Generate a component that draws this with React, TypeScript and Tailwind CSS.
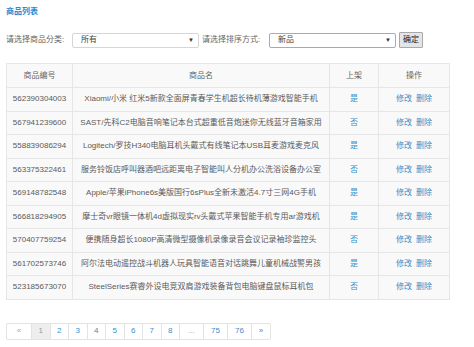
import React from 'react';

const products = [
  { id: '562390304003', name: 'Xiaomi/小米 红米5新款全面屏青春学生机超长待机薄游戏智能手机', on: true },
  { id: '567941239600', name: 'SAST/先科C2电脑音响笔记本台式超重低音炮迷你无线蓝牙音箱家用', on: false },
  { id: '558839086294', name: 'Logitech/罗技H340电脑耳机头戴式有线笔记本USB耳麦游戏麦克风', on: true },
  { id: '563375322461', name: '服务铃饭店呼叫器酒吧远距离电子智能叫人分机办公洗浴设备办公室', on: false },
  { id: '569148782548', name: 'Apple/苹果iPhone6s美版国行6sPlus全新未激活4.7寸三网4G手机', on: true },
  { id: '566818294905', name: '摩士奇vr眼镜一体机4d虚拟现实rv头戴式苹果智能手机专用ar游戏机', on: true },
  { id: '570407759254', name: '便携随身超长1080P高清微型摄像机录像录音会议记录袖珍监控头', on: false },
  { id: '561702573746', name: '阿尔法电动遥控战斗机器人玩具智能语音对话跳舞儿童机械战警男孩', on: true },
  { id: '523185673070', name: 'SteelSeries赛睿外设电竞双肩游戏装备背包电脑键盘鼠标耳机包', on: false },
];

const pages = ['1', '2', '3', '4', '5', '6', '7', '8', '...', '75', '76'];

function Select({ value, focused }: { value: string; focused?: boolean }) {
  return (
    <div
      className={`flex h-[15px] w-[127px] items-center justify-between rounded-[2px] border bg-white pl-2 pr-[4px] ${
        focused ? 'border-[#8eaee0]' : 'border-[#d6d6d6]'
      }`}
    >
      <span className="text-[8px] text-[#444]">{value}</span>
      <span className="text-[6px] text-[#333]">▼</span>
    </div>
  );
}

export default function App() {
  return (
    <div
      className="h-[347px] w-[474px] overflow-hidden bg-white text-[8px] text-[#5a5a5a]"
      style={{ fontFamily: '"Liberation Sans", "Noto Sans CJK SC", sans-serif' }}
    >
      {/* Title */}
      <div className="px-[6px] pt-[7px] text-[8px] font-bold leading-[10px] text-[#2b8bd0]">商品列表</div>

      {/* Filters */}
      <div className="mt-[15px] flex items-center px-[6px]">
        <span className="w-[66px] text-[#666]">请选择商品分类:</span>
        <Select value="所有" />
        <span className="ml-[3px] w-[67px] text-[#666]">请选择排序方式:</span>
        <Select value="新品" focused />
        <button className="ml-[3px] h-[16px] rounded-[1px] border border-[#a9a9a9] bg-[#e5e5e5] px-[3px] text-[8px] text-[#222]">
          确定
        </button>
      </div>

      {/* Table */}
      <table className="ml-[6px] mt-[15px] w-[443px] table-fixed border-collapse bg-[#f9f9f9] text-center">
        <colgroup>
          <col className="w-[66px]" />
          <col className="w-[257px]" />
          <col className="w-[49px]" />
          <col className="w-[71px]" />
        </colgroup>
        <thead>
          <tr className="h-[24px]">
            <th className="border border-[#e6e6e6] font-normal text-[#666]">商品编号</th>
            <th className="border border-[#e6e6e6] font-normal text-[#666]">商品名</th>
            <th className="border border-[#e6e6e6] font-normal text-[#666]">上架</th>
            <th className="border border-[#e6e6e6] font-normal text-[#666]">操作</th>
          </tr>
        </thead>
        <tbody>
          {products.map((p) => (
            <tr key={p.id} className="h-[23.5px]">
              <td className="border border-[#e6e6e6] text-[#5a5a5a]">{p.id}</td>
              <td className="whitespace-nowrap border border-[#e6e6e6] text-[#5a5a5a]">{p.name}</td>
              <td className="border border-[#e6e6e6] text-[#3a8fc8]">{p.on ? '是' : '否'}</td>
              <td className="border border-[#e6e6e6] text-[#3a8fc8]">
                <span>修改</span>
                <span className="ml-[4px]">删除</span>
              </td>
            </tr>
          ))}
        </tbody>
      </table>

      {/* Pagination */}
      <div className="ml-[6px] mt-[23px] flex h-[17px] w-fit rounded-[2px] border border-[#e3e3e3]">
        <span className="flex w-[24px] items-center justify-center text-[#aaa]">«</span>
        {pages.map((p, i) => (
          <span
            key={p}
            className={`flex items-center justify-center border-l border-[#e3e3e3] ${
              p.length > 1 ? 'w-[24px]' : 'w-[18.5px]'
            } ${i === 0 ? 'bg-[#eeeeee] text-[#999]' : p === '...' ? 'text-[#aaa]' : 'text-[#3a8fc8]'}`}
          >
            {p}
          </span>
        ))}
        <span className="flex w-[19px] items-center justify-center border-l border-[#e3e3e3] text-[#3a8fc8]">»</span>
      </div>
    </div>
  );
}
